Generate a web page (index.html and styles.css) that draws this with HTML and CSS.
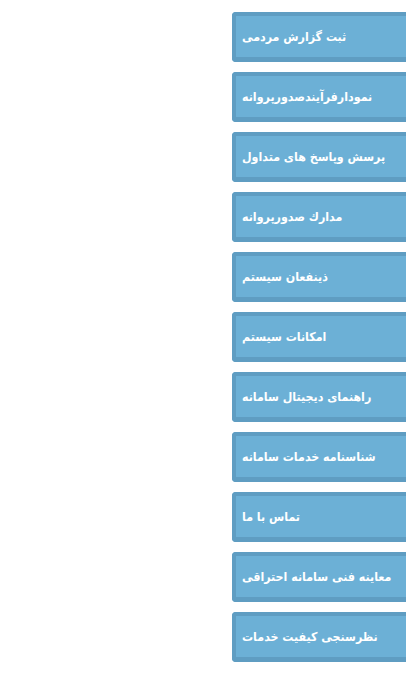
FILE: index.html
```html
<!DOCTYPE html>
<html lang="fa">
<head>
<meta charset="utf-8">
<link rel="stylesheet" href="styles.css">
</head>
<body>
<nav class="menu">
  <a class="item" href="#">ثبت گزارش مردمی</a>
  <a class="item" href="#">نمودارفرآیندصدورپروانه</a>
  <a class="item" href="#">پرسش وپاسخ های متداول</a>
  <a class="item" href="#">مدارك صدورپروانه</a>
  <a class="item" href="#">ذینفعان سیستم</a>
  <a class="item" href="#">امکانات سیستم</a>
  <a class="item" href="#">راهنمای دیجیتال سامانه</a>
  <a class="item" href="#">شناسنامه خدمات سامانه</a>
  <a class="item" href="#">تماس با ما</a>
  <a class="item" href="#">معاینه فنی سامانه احتراقی</a>
  <a class="item" href="#">نظرسنجی کیفیت خدمات</a>
</nav>
</body>
</html>
```
FILE: styles.css
```css
html, body {
  margin: 0;
  padding: 0;
  background: #ffffff;
  overflow: hidden;
}
.menu {
  display: flex;
  flex-direction: column;
  gap: 10px;
  padding-top: 12px;
  margin-left: 232px;
  width: 174px;
}
.item {
  display: flex;
  align-items: center;
  box-sizing: border-box;
  height: 50px;
  padding-left: 6px;
  border: 4px solid #5f9dc2;
  border-right: 0;
  border-bottom-width: 5px;
  border-radius: 4px 0 0 4px;
  background: #6cb0d6;
  color: #ffffff;
  text-decoration: none;
  font-family: "DejaVu Sans Condensed", "DejaVu Sans", sans-serif;
  font-stretch: condensed;
  font-weight: bold;
  font-size: 12.3px;
  white-space: nowrap;
  direction: ltr;
  text-align: left;
  unicode-bidi: plaintext;
}
```
